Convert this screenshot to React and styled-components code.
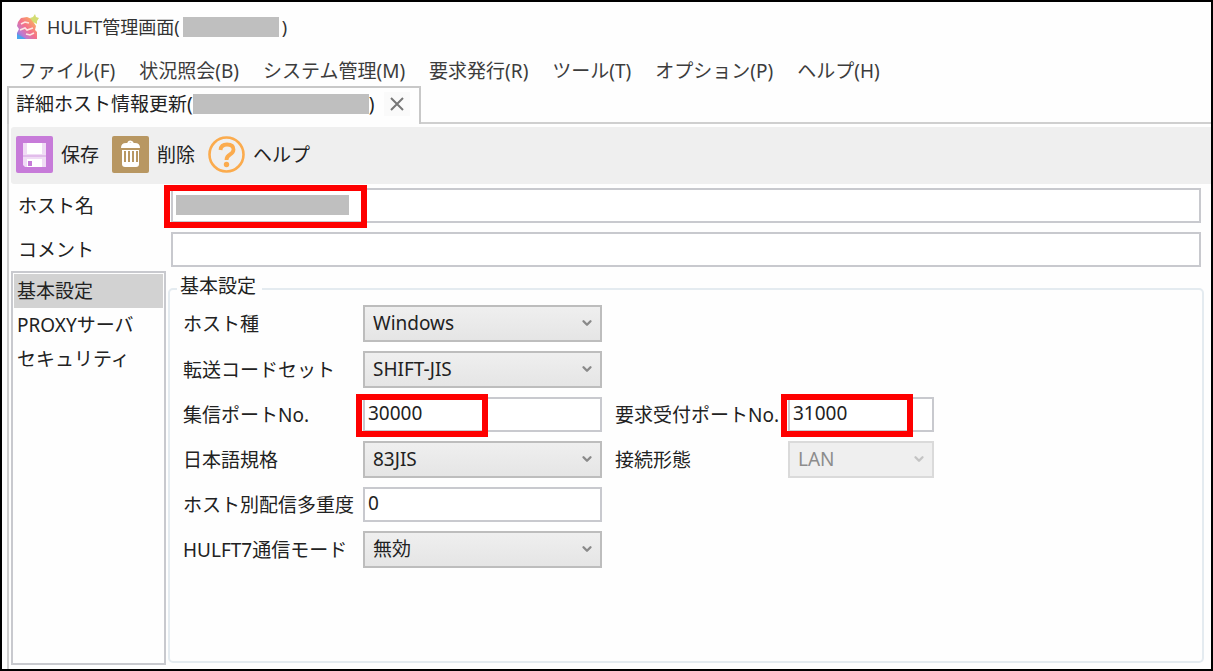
import React, { useState } from "react";
import styled, { createGlobalStyle } from "styled-components";
import { ChevronDown } from "lucide-react";

const menus = [
  "ファイル(F)",
  "状況照会(B)",
  "システム管理(M)",
  "要求発行(R)",
  "ツール(T)",
  "オプション(P)",
  "ヘルプ(H)",
];

const sections = ["基本設定", "PROXYサーバ", "セキュリティ"];

const AppIcon = () => (
  <svg width="23" height="26" viewBox="0 0 23 26" aria-hidden="true">
    <defs>
      <linearGradient id="face" x1="0" y1="1" x2="1" y2="0">
        <stop offset="0" stopColor="#4d8be8" />
        <stop offset="0.25" stopColor="#c07ad0" />
        <stop offset="0.5" stopColor="#f4708a" />
        <stop offset="0.8" stopColor="#f9a468" />
        <stop offset="1" stopColor="#f6d35a" />
      </linearGradient>
    </defs>
    <path
      d="M2 8 L5 4 L11 3 L16 5 L18 9 L20 12 L19 16 L21 18 L21 25 L1 25 L1 19 L3 15 L1 12 Z"
      fill="url(#face)"
    />
    <path d="M14 4 L17 3 L19 0 L20 3 L23 4 L21 7 L21 10 L17 8 Z" fill="#d3dc72" />
    <path
      d="M5 10 L9 8 L13 9 M4 16 L9 14 L11 16 L17 14 M10 20 L14 21 L18 19"
      fill="none"
      stroke="#fde6e2"
      strokeWidth="1.6"
    />
    <path d="M1 20 L10 25 L1 25 Z" fill="#4aa6ee" />
  </svg>
);

const SaveIcon = () => (
  <svg width="37" height="37" viewBox="0 0 37 37" aria-hidden="true">
    <rect width="37" height="37" rx="2" fill="#c77bd9" />
    <path d="M7 7 H30 V31 H9 L7 29 Z" fill="#f0dcf5" />
    <rect x="11" y="7" width="15" height="11" fill="#fff" />
    <path d="M7 20 H30" stroke="#e2bdeb" strokeWidth="2" />
    <rect x="11" y="23" width="15" height="8" fill="#fff" />
    <rect x="12" y="25" width="4" height="5" fill="#c77bd9" />
  </svg>
);

const TrashIcon = () => (
  <svg width="37" height="37" viewBox="0 0 37 37" aria-hidden="true">
    <rect width="37" height="37" rx="2" fill="#b89762" />
    <path d="M16 7 Q18 4 21 7" fill="none" stroke="#fff" strokeWidth="2" />
    <path d="M9 12 Q9 7 14 7 H23 Q28 7 28 12 Z" fill="#fff" />
    <path d="M10 14 H27 V28 Q27 31 24 31 H13 Q10 31 10 28 Z" fill="#fff" />
    <path
      d="M13 15 V26 M17 15 V26 M21 15 V26 M25 15 V26"
      stroke="#b89762"
      strokeWidth="2"
    />
  </svg>
);

const HelpIcon = () => (
  <svg width="37" height="37" viewBox="0 0 37 37" aria-hidden="true">
    <circle cx="18.5" cy="18.5" r="17" fill="none" stroke="#fbab4d" strokeWidth="2.6" />
    <path
      d="M12.5 14 Q13 8.5 19 8.5 Q25.5 8.5 25.5 13.5 Q25.5 16.5 22 18.5 Q18.5 20.5 18.5 24"
      fill="none"
      stroke="#fbab4d"
      strokeWidth="3.8"
    />
    <circle cx="18.5" cy="28.5" r="2.7" fill="#fbab4d" />
  </svg>
);

const SelectField = ({ id, value, disabled }) => (
  <Field>
    <Select id={id} defaultValue={value} disabled={disabled}>
      <option>{value}</option>
    </Select>
    <Arrow $disabled={disabled} size={14} strokeWidth={4} />
  </Field>
);

const TextField = ({ id, value, mark, masked }) => (
  <Field>
    <Input id={id} type="text" defaultValue={value} />
    {masked && <FieldMask />}
    {mark && <Mark $width={mark} />}
  </Field>
);

const App = () => {
  const [section, setSection] = useState("基本設定");

  return (
    <>
      <GlobalStyle />
      <Window>
        <TitleBar>
          <AppIcon />
          <Title>
            HULFT管理画面(
            <Mask $width="96px" />)
          </Title>
        </TitleBar>
        <MenuBar>
          {menus.map((menu) => (
            <MenuItem key={menu}>{menu}</MenuItem>
          ))}
        </MenuBar>
        <TabStrip>
          <Tab>
            <TabTitle>
              詳細ホスト情報更新(
              <Mask $width="176px" />)
            </TabTitle>
            <CloseButton aria-label="閉じる">
              <svg width="14" height="14" viewBox="0 0 14 14">
                <path d="M1 1 L13 13 M13 1 L1 13" stroke="#777" strokeWidth="2" />
              </svg>
            </CloseButton>
          </Tab>
          <TabLine />
        </TabStrip>
        <Page>
          <Toolbar>
            <ToolButton>
              <SaveIcon />
              保存
            </ToolButton>
            <ToolButton>
              <TrashIcon />
              削除
            </ToolButton>
            <ToolButton>
              <HelpIcon />
              ヘルプ
            </ToolButton>
          </Toolbar>
          <HostForm>
            <Label htmlFor="host">ホスト名</Label>
            <TextField id="host" mark="203px" masked />
            <Label htmlFor="comment">コメント</Label>
            <TextField id="comment" />
          </HostForm>
          <Content>
            <SectionList>
              {sections.map((name) => (
                <li key={name}>
                  <SectionButton
                    $isActive={section === name}
                    onClick={() => setSection(name)}
                  >
                    {name}
                  </SectionButton>
                </li>
              ))}
            </SectionList>
            <Group>
              <Legend>基本設定</Legend>
              <Settings>
                <Label htmlFor="kind">ホスト種</Label>
                <SelectField id="kind" value="Windows" />
                <RowEnd />
                <Label htmlFor="code">転送コードセット</Label>
                <SelectField id="code" value="SHIFT-JIS" />
                <RowEnd />
                <Label htmlFor="recvPort">集信ポートNo.</Label>
                <TextField id="recvPort" value="30000" mark="132px" />
                <SubLabel htmlFor="reqPort">要求受付ポートNo.</SubLabel>
                <TextField id="reqPort" value="31000" mark="132px" />
                <Label htmlFor="jis">日本語規格</Label>
                <SelectField id="jis" value="83JIS" />
                <SubLabel htmlFor="connect">接続形態</SubLabel>
                <SelectField id="connect" value="LAN" disabled />
                <Label htmlFor="multi">ホスト別配信多重度</Label>
                <TextField id="multi" value="0" />
                <RowEnd />
                <Label htmlFor="mode">HULFT7通信モード</Label>
                <SelectField id="mode" value="無効" />
                <RowEnd />
              </Settings>
            </Group>
          </Content>
        </Page>
      </Window>
    </>
  );
};

export default App;

const GlobalStyle = createGlobalStyle`
  * {
    box-sizing: border-box;
  }
  body {
    margin: 0;
    background-color: #fff;
  }
  body, button, input, select {
    font-family: "Noto Sans", "Noto Sans CJK JP", sans-serif;
    font-size: 19px;
    line-height: 24px;
    color: #222;
  }
`;

const Window = styled.div`
  display: flex;
  flex-direction: column;
  min-height: 100vh;
  border: 2px solid #000;
  background-color: #fefefe;
`;

const TitleBar = styled.header`
  display: flex;
  align-items: center;
  gap: 8px;
  height: 50px;
  padding-left: 14px;
`;

const Title = styled.h1`
  display: flex;
  align-items: center;
  gap: 3px;
  margin: 0;
  font-size: 18px;
  font-weight: 400;
  color: #333;
`;

const Mask = styled.span`
  width: ${(props) => props.$width};
  height: 20px;
  background-color: #bfbfbf;
`;

const MenuBar = styled.nav`
  display: flex;
  align-items: center;
  gap: 24px;
  height: 34px;
  padding: 4px 0 0 16px;
`;

const MenuItem = styled.button`
  padding: 0;
  border: none;
  background: none;
  color: #3c3c3c;
  white-space: nowrap;
`;

const TabStrip = styled.div`
  display: flex;
  height: 38px;
  padding-left: 5px;
`;

const Tab = styled.div`
  display: flex;
  align-items: flex-start;
  gap: 10px;
  padding: 4px 9px 0 7px;
  border: 2px solid #c8c8c8;
  border-bottom: none;
`;

const TabTitle = styled.span`
  display: flex;
  align-items: center;
  white-space: nowrap;
`;

const CloseButton = styled.button`
  display: flex;
  align-items: center;
  justify-content: center;
  width: 26px;
  height: 24px;
  padding: 0;
  border: none;
  background-color: #fafafa;
`;

const TabLine = styled.div`
  flex: 1;
  border-bottom: 2px solid #cfcfcf;
`;

const Page = styled.main`
  display: flex;
  flex-direction: column;
  flex: 1;
  margin-left: 5px;
  padding: 3px 0 4px 2px;
  border-left: 2px solid #cfcfcf;
`;

const Toolbar = styled.div`
  display: flex;
  align-items: center;
  gap: 13px;
  height: 57px;
  padding: 0 0 2px 5px;
  border-radius: 3px 0 0 3px;
  background-color: #efefef;
`;

const ToolButton = styled.button`
  display: flex;
  align-items: center;
  gap: 8px;
  padding: 0;
  border: none;
  background: none;
`;

const HostForm = styled.div`
  display: grid;
  grid-template-columns: 153px 1fr;
  row-gap: 9px;
  padding: 4px 10px 4px 7px;
`;

const Label = styled.label`
  align-self: center;
  white-space: nowrap;
`;

const SubLabel = styled(Label)`
  padding-left: 13px;
`;

const Field = styled.div`
  position: relative;
  display: flex;
`;

const Input = styled.input`
  width: 100%;
  height: 35px;
  padding: 0 3px 4px;
  border: 2px solid #c8c9ce;
  background-color: #fff;
`;

const Select = styled.select`
  appearance: none;
  width: 100%;
  height: 37px;
  padding: 0 8px 2px;
  border: 2px solid #bdbdbd;
  border-radius: 0;
  background: linear-gradient(#efefef, #e5e5e5);

  &:disabled {
    border-color: #dadada;
    background: #efefef;
    color: #8c8c8c;
    opacity: 1;
  }
`;

const Arrow = styled(ChevronDown)`
  position: absolute;
  top: 11px;
  right: 8px;
  pointer-events: none;
  color: ${(props) => (props.$disabled ? "#c4c4c4" : "#8a8a8a")};
`;

const FieldMask = styled.span`
  position: absolute;
  top: 7px;
  left: 5px;
  width: 173px;
  height: 20px;
  background-color: #bfbfbf;
`;

const Mark = styled.span`
  position: absolute;
  top: -3px;
  left: -7px;
  width: ${(props) => props.$width};
  height: 43px;
  border: 6px solid #fe0000;
  pointer-events: none;
`;

const Content = styled.div`
  display: flex;
  flex: 1;
  gap: 2px;
  padding-right: 7px;
`;

const SectionList = styled.ul`
  width: 155px;
  margin: 0;
  padding: 1px;
  border: 2px solid #c8c9ce;
  list-style-type: none;
`;

const SectionButton = styled.button`
  width: 100%;
  height: 34px;
  padding: 0 3px;
  border: none;
  background-color: ${(props) => (props.$isActive ? "#d2d2d2" : "transparent")};
  text-align: left;
`;

const Group = styled.fieldset`
  flex: 1;
  min-width: 0;
  margin: 3px 0 2px;
  padding: 1px 7px 0;
  border: 2px solid #e4ebf0;
  border-radius: 5px;
`;

const Legend = styled.legend`
  padding: 0 6px 6px 3px;
`;

const Settings = styled.div`
  display: grid;
  grid-template-columns: 180px 239px 186px 146px;
  row-gap: 9px;
  padding-left: 6px;
`;

const RowEnd = styled.span`
  grid-column: span 2;
`;
